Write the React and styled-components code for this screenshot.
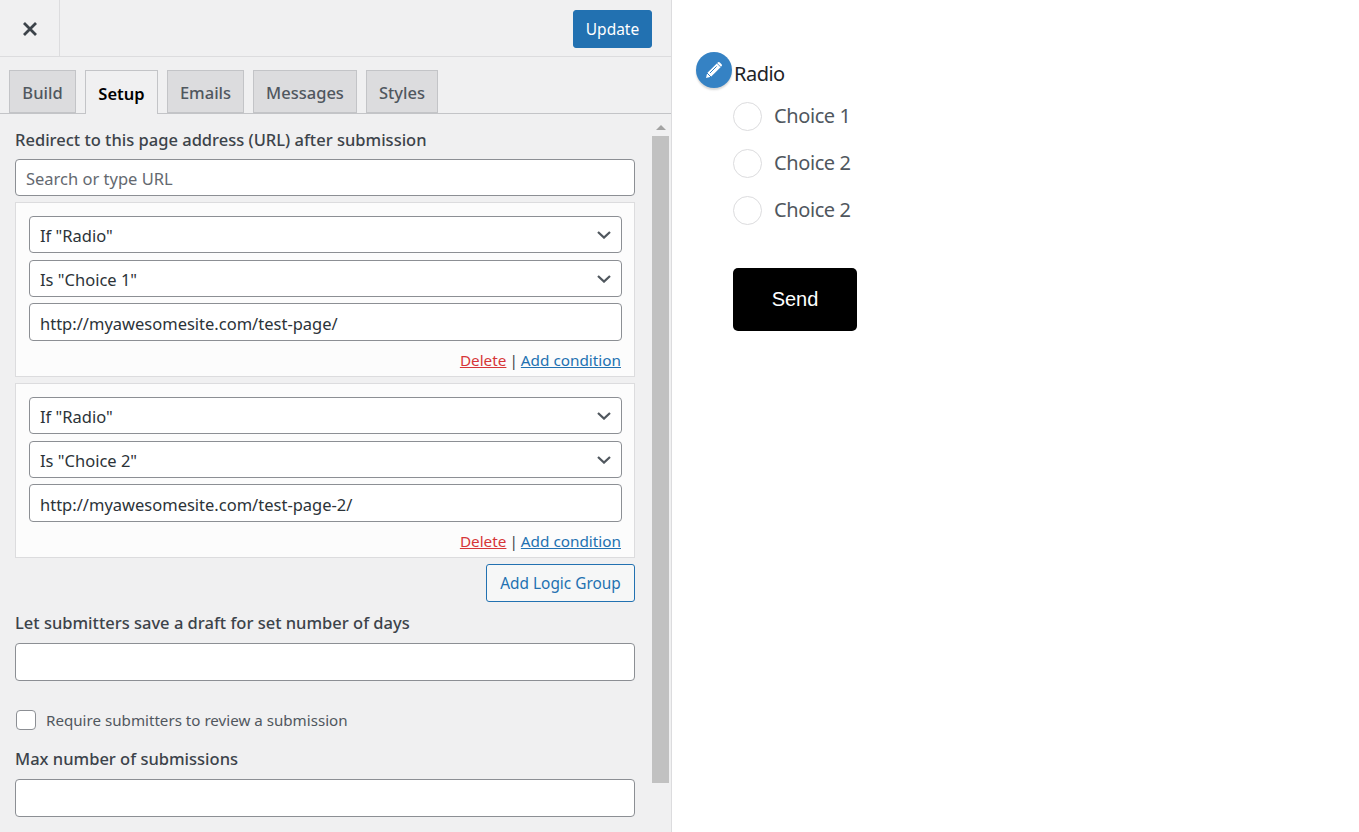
import React from 'react'
import styled, { createGlobalStyle } from 'styled-components'

const font = '"Noto Sans", "Open Sans", sans-serif'

const GlobalStyle = createGlobalStyle`
  html, body { margin: 0; height: 100%; background: #fff; }
  body { font-family: ${font}; overflow: hidden; }
  #root { height: 100%; }
  * { box-sizing: border-box; }
`

const Page = styled.div`
  display: flex;
  height: 832px;
`

const Sidebar = styled.aside`
  width: 672px;
  flex: none;
  height: 100%;
  display: flex;
  flex-direction: column;
  background: #f0f0f1;
  border-right: 1px solid #dcdcde;
  overflow: hidden;
`

const Header = styled.header`
  height: 57px;
  flex: none;
  display: flex;
  justify-content: space-between;
  border-bottom: 1px solid #dcdcde;
`

const CloseButton = styled.button`
  width: 60px;
  height: 56px;
  padding: 2px 0 0;
  display: flex;
  align-items: center;
  justify-content: center;
  background: transparent;
  border: 0;
  border-right: 1px solid #dcdcde;
  color: #3c434a;
`

const UpdateButton = styled.button`
  width: 79px;
  height: 38px;
  margin: 10px 19px 0 0;
  padding: 0;
  background: #2271b1;
  border: 1px solid #2271b1;
  border-radius: 3px;
  color: #fff;
  font: 15.5px ${font};
`

const TabBar = styled.nav`
  height: 57px;
  flex: none;
  display: flex;
  gap: 9px;
  padding: 13px 0 0 9px;
  border-bottom: 1px solid #c3c4c7;
`

const Tab = styled.div`
  height: ${p => (p.$active ? '44px' : '43px')};
  width: ${p => p.$w}px;
  display: flex;
  align-items: center;
  justify-content: center;
  padding-top: 1px;
  background: ${p => (p.$active ? '#f0f0f1' : '#dcdcde')};
  border: 1px solid #c3c4c7;
  border-bottom: ${p => (p.$active ? '0' : '1px solid #c3c4c7')};
  color: ${p => (p.$active ? '#000' : '#50575e')};
  font-size: 16.5px;
  font-weight: ${p => (p.$active ? 600 : 500)};
`

const Body = styled.div`
  flex: 1;
  min-height: 0;
  display: flex;
`

const Content = styled.div`
  width: 650px;
  flex: none;
  padding: 14px 0 0 15px;
  overflow: hidden;
`

const Column = styled.div`
  width: 620px;
`

const Label = styled.div`
  height: 24px;
  line-height: 24px;
  font-size: 16.5px;
  font-weight: 500;
  color: #3c434a;
  margin-top: ${p => p.$top || 0}px;
`

const Field = styled.input`
  display: block;
  width: 100%;
  height: ${p => p.$h || 38}px;
  margin-top: ${p => p.$top || 0}px;
  padding: 2px 10px 0;
  background: #fff;
  border: 1px solid #8c8f94;
  border-radius: 4px;
  color: #2c3338;
  font: 16.5px ${font};

  &::placeholder {
    color: #646970;
    opacity: 1;
  }
`

const Group = styled.section`
  height: 175px;
  margin-top: ${p => p.$top}px;
  padding: 13px 12px 0 13px;
  background: #fcfcfc;
  border: 1px solid #dcdcde;
`

const SelectWrap = styled.div`
  position: relative;
  margin-bottom: ${p => p.$bottom}px;

  svg {
    position: absolute;
    right: 11px;
    top: 15px;
    pointer-events: none;
  }
`

const Select = styled.select`
  display: block;
  width: 100%;
  height: 37px;
  padding: 1px 10px 0;
  appearance: none;
  background: #fff;
  border: 1px solid #8c8f94;
  border-radius: 4px;
  color: #2c3338;
  font: 16.5px ${font};
`

const LinkRow = styled.div`
  display: flex;
  justify-content: flex-end;
  gap: 3px;
  margin-top: 8px;
  padding-right: 1px;
  height: 22px;
  line-height: 22px;
  font-size: 15.3px;
  color: #3c434a;
`

const TextLink = styled.a`
  color: ${p => (p.$danger ? '#d63638' : '#2271b1')};
  text-decoration: underline;
`

const ButtonRow = styled.div`
  display: flex;
  justify-content: flex-end;
  margin-top: 6px;
`

const LogicButton = styled.button`
  width: 149px;
  height: 38px;
  padding: 1px 0 0;
  background: #f6f7f7;
  border: 1px solid #2271b1;
  border-radius: 3px;
  color: #2271b1;
  font: 15.4px ${font};
`

const CheckRow = styled.label`
  display: flex;
  align-items: center;
  gap: 10px;
  height: 22px;
  margin: 28px 0 0 1px;
  color: #50575e;
  font-size: 15.15px;
`

const CheckBox = styled.span`
  width: 20px;
  height: 20px;
  background: #fff;
  border: 1px solid #8c8f94;
  border-radius: 4px;
`

const Scrollbar = styled.div`
  width: 21px;
  flex: none;
  padding: 11px 0 0 2px;
`

const ScrollArrow = styled.div`
  width: 0;
  height: 0;
  margin: 0 0 6px 4px;
  border-left: 5px solid transparent;
  border-right: 5px solid transparent;
  border-bottom: 5px solid #a3a3a3;
`

const ScrollThumb = styled.div`
  width: 17px;
  height: 647px;
  background: #c1c1c1;
`

const Preview = styled.main`
  flex: 1;
  padding: 52px 0 0 24px;
  background: #fff;
`

const TitleRow = styled.div`
  display: flex;
  align-items: center;
  height: 36px;
  gap: 2px;
  margin-bottom: 14px;
`

const EditBadge = styled.div`
  width: 36px;
  height: 36px;
  display: flex;
  align-items: center;
  justify-content: center;
  border-radius: 50%;
  background: #3582c4;
  box-shadow: 0 2px 2px 0 rgba(0, 0, 0, 0.16);
`

const FieldTitle = styled.div`
  margin-top: 6px;
  font-size: 20px;
  color: #1d2327;
  letter-spacing: -0.5px;
`

const Choice = styled.div`
  display: flex;
  align-items: flex-start;
  gap: 12px;
  height: 28px;
  margin: 0 0 19px 37px;
  font-size: 20px;
  line-height: 28px;
  color: #50575e;
  letter-spacing: -0.4px;
`

const RadioDot = styled.span`
  width: 29px;
  height: 29px;
  flex: none;
  border: 1px solid #dcdcde;
  border-radius: 50%;
  background: #fff;
`

const SendButton = styled.button`
  display: block;
  width: 124px;
  height: 63px;
  margin: 44px 0 0 37px;
  padding: 0;
  background: #000;
  border: 0;
  border-radius: 5px;
  color: #fff;
  font: 20px "Liberation Sans", Arial, sans-serif;
`

const Chevron = () => (
  <svg width="14" height="8" viewBox="0 0 14 8" fill="none" stroke="#50575e" strokeWidth="2.2">
    <path d="M1 1l6 5.6L13 1" />
  </svg>
)

const Pencil = () => (
  <svg width="16" height="16" viewBox="0 0 16 16">
    <path fill="#fff" d="M0 16l1.2-5L10.8 1.4l3.8 3.8L5 14.8z" />
    <path fill="#fff" d="M11.8.5a1.4 1.4 0 0 1 2 0l1.7 1.7a1.4 1.4 0 0 1 0 2l-.6.6-3.8-3.8z" />
    <path stroke="#3582c4" strokeWidth="1" fill="none" d="M4 11l6.6-6.6M1 11l4 4" />
  </svg>
)

const tabs = [
  { name: 'Build', w: 67 },
  { name: 'Setup', w: 73, active: true },
  { name: 'Emails', w: 77 },
  { name: 'Messages', w: 104 },
  { name: 'Styles', w: 72 },
]

const groups = [
  { choice: 'Is "Choice 1"', url: 'http://myawesomesite.com/test-page/', top: 6 },
  { choice: 'Is "Choice 2"', url: 'http://myawesomesite.com/test-page-2/', top: 6 },
]

const LogicGroup = ({ choice, url, top }) => (
  <Group $top={top}>
    <SelectWrap $bottom={7}>
      <Select defaultValue="radio">
        <option value="radio">If "Radio"</option>
      </Select>
      <Chevron />
    </SelectWrap>
    <SelectWrap $bottom={6}>
      <Select defaultValue="choice">
        <option value="choice">{choice}</option>
      </Select>
      <Chevron />
    </SelectWrap>
    <Field defaultValue={url} />
    <LinkRow>
      <TextLink $danger href="#">Delete</TextLink>
      <span>|</span>
      <TextLink href="#">Add condition</TextLink>
    </LinkRow>
  </Group>
)

export default function App() {
  return (
    <Page>
      <GlobalStyle />
      <Sidebar>
        <Header>
          <CloseButton aria-label="Close">
            <svg width="14" height="14" viewBox="0 0 14 14" fill="none" stroke="currentColor" strokeWidth="2.8">
              <path d="M1 1l12 12M13 1L1 13" />
            </svg>
          </CloseButton>
          <UpdateButton>Update</UpdateButton>
        </Header>
        <TabBar>
          {tabs.map(t => (
            <Tab key={t.name} $w={t.w} $active={t.active}>{t.name}</Tab>
          ))}
        </TabBar>
        <Body>
          <Content>
            <Column>
              <Label>Redirect to this page address (URL) after submission</Label>
              <Field $h={37} $top={7} placeholder="Search or type URL" />
              {groups.map(g => (
                <LogicGroup key={g.url} {...g} />
              ))}
              <ButtonRow>
                <LogicButton>Add Logic Group</LogicButton>
              </ButtonRow>
              <Label $top={9}>Let submitters save a draft for set number of days</Label>
              <Field $top={8} />
              <CheckRow>
                <CheckBox />
                Require submitters to review a submission
              </CheckRow>
              <Label $top={16}>Max number of submissions</Label>
              <Field $top={8} />
            </Column>
          </Content>
          <Scrollbar>
            <ScrollArrow />
            <ScrollThumb />
          </Scrollbar>
        </Body>
      </Sidebar>
      <Preview>
        <TitleRow>
          <EditBadge><Pencil /></EditBadge>
          <FieldTitle>Radio</FieldTitle>
        </TitleRow>
        {['Choice 1', 'Choice 2', 'Choice 2'].map((c, i) => (
          <Choice key={i}>
            <RadioDot />
            {c}
          </Choice>
        ))}
        <SendButton>Send</SendButton>
      </Preview>
    </Page>
  )
}
